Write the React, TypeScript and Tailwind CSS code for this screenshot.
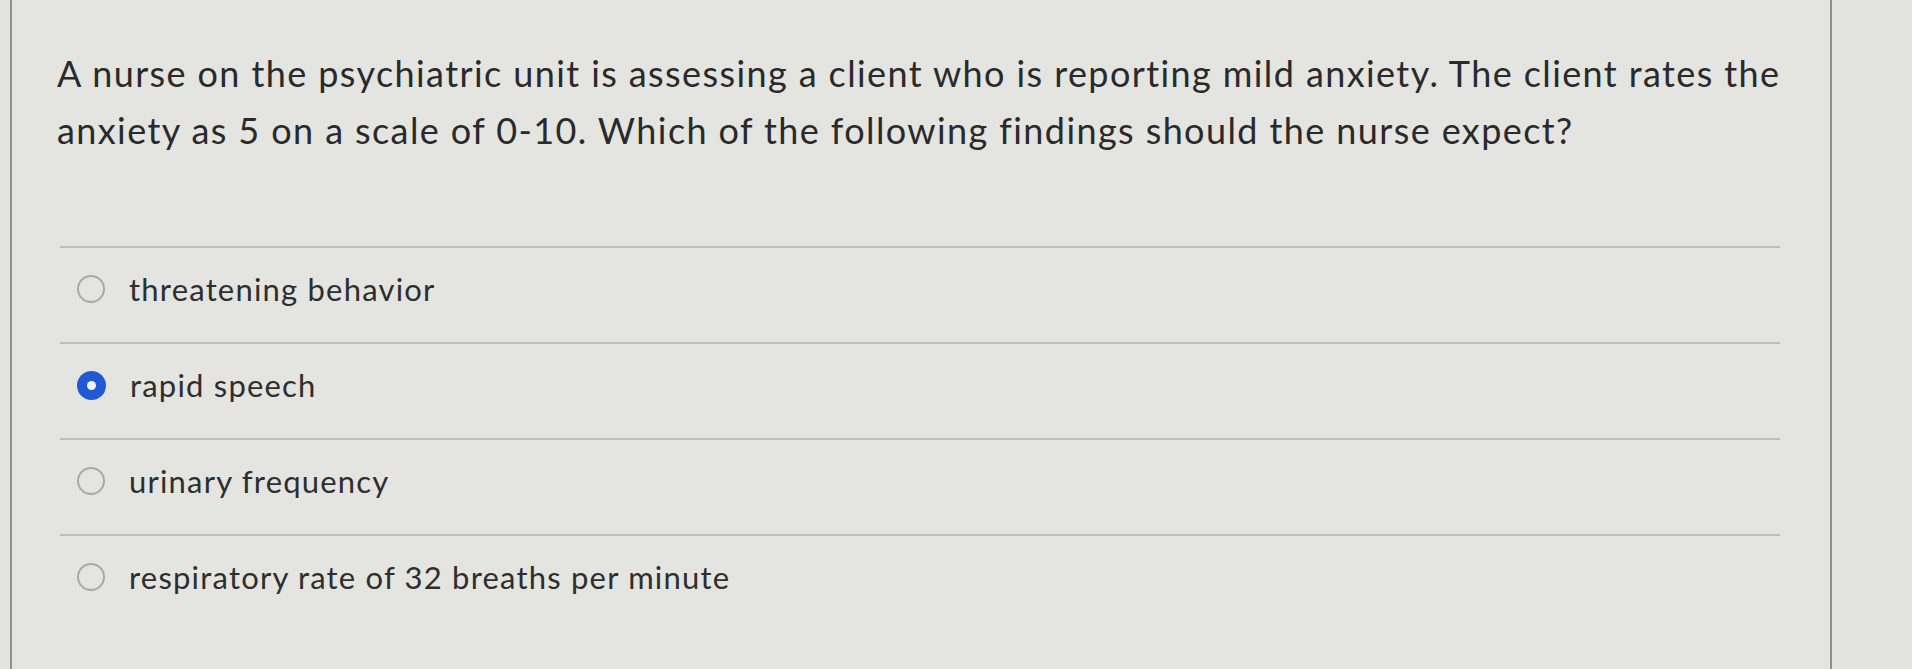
import React from "react";

const options = [
  { label: "threatening behavior", selected: false },
  { label: "rapid speech", selected: true },
  { label: "urinary frequency", selected: false },
  { label: "respiratory rate of 32 breaths per minute", selected: false },
];

function Radio({ selected }: { selected: boolean }) {
  if (selected) {
    return (
      <span className="flex h-[29px] w-[29px] shrink-0 items-center justify-center rounded-full bg-[#1f5ad4]">
        <span className="h-[9px] w-[9px] rounded-full bg-[#f4f4f2]" />
      </span>
    );
  }
  return <span className="h-[28px] w-[28px] shrink-0 rounded-full border-2 border-[#a9a9a7]" />;
}

export default function App() {
  return (
    <div className="h-[669px] w-[1912px] overflow-hidden bg-[#e3e3e0] font-['Lato',sans-serif] text-[#2a2a2a]">
      <div className="ml-[10px] h-full w-[1822px] border-x-2 border-[#8e8e8c] bg-[#e4e4e1]">
        {/* question */}
        <p className="pl-[45px] pr-[20px] pt-[45px] text-[36px] leading-[57px] tracking-[1.4px]">
          A nurse on the psychiatric unit is assessing a client who is reporting mild anxiety. The client rates the
          anxiety as 5 on a scale of 0-10. Which of the following findings should the nurse expect?
        </p>

        <div className="mt-[87px] ml-[48px] w-[1720px]">
          {options.map((o) => (
            <div key={o.label} className="border-t-2 border-[#bdbdba] pt-[23px] pb-[35px]">
              <label className="flex items-center gap-[24px] pl-[17px] text-[31px] leading-[36px] tracking-[1.2px] text-[#2e2e2e]">
                <Radio selected={o.selected} />
                <span>{o.label}</span>
              </label>
            </div>
          ))}
        </div>
      </div>
    </div>
  );
}
